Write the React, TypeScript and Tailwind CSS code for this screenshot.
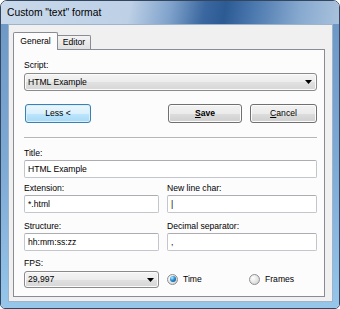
import clsx from "clsx";

function Label({ text, className }: { text: string; className?: string }) {
  return <div className={clsx("h-[12px] leading-[12px]", className)}>{text}</div>;
}

function Field({ value, className }: { value: string; className?: string }) {
  return (
    <div
      className={clsx(
        "flex h-[18px] items-center rounded-[2px] border border-[#c3c6cc] border-t-[#abadb3] bg-white pl-[3px]",
        className
      )}
    >
      {value}
    </div>
  );
}

function Combo({ value, className }: { value: string; className?: string }) {
  return (
    <div
      className={clsx(
        "flex items-center justify-between rounded-[3px] border border-[#8a8a8a] bg-[linear-gradient(#f4f4f4_0%,#ececec_50%,#e1e1e1_50%,#d6d6d6_100%)] pl-[3px] pr-[4px] shadow-[inset_0_0_0_1px_#fbfbfb]",
        className
      )}
    >
      <span>{value}</span>
      <svg width="7" height="4" viewBox="0 0 7 4">
        <path d="M0 0h7L3.5 4z" fill="#000" />
      </svg>
    </div>
  );
}

function Radio({ label, checked }: { label: string; checked?: boolean }) {
  return (
    <div className="flex items-center gap-[5px]">
      <span className="flex size-[11px] items-center justify-center rounded-full border border-[#8e8f8f] bg-[radial-gradient(circle_at_35%_35%,#ffffff_0%,#e6e6e6_50%,#c4c4c4_100%)]">
        {checked && (
          <span className="size-[6px] rounded-full bg-[radial-gradient(circle_at_35%_30%,#b8ecff_0%,#2a8fd6_45%,#0b3f78_100%)]" />
        )}
      </span>
      <span>{label}</span>
    </div>
  );
}

function Button({
  children,
  className,
  focused,
}: {
  children: React.ReactNode;
  className?: string;
  focused?: boolean;
}) {
  return (
    <div
      className={clsx(
        "flex h-[19px] items-center justify-center rounded-[3px] border",
        focused
          ? "border-[#3c7fb1] bg-[linear-gradient(#eaf6fd_0%,#d9f0fc_50%,#bee6fd_50%,#a7d9f5_100%)] shadow-[inset_0_0_0_1px_#d6effc]"
          : "border-[#707070] bg-[linear-gradient(#f2f2f2_0%,#ebebeb_50%,#dddddd_50%,#cfcfcf_100%)] shadow-[inset_0_0_0_1px_#fcfcfc]",
        className
      )}
    >
      {children}
    </div>
  );
}

export default function App() {
  return (
    <div className="flex h-[309px] w-[340px] flex-col overflow-hidden rounded-t-[7px] rounded-b-[5px] border border-[#34465e] font-['Liberation_Sans',Arial,sans-serif] text-[8.6px] text-black">
      {/* title bar */}
      <div className="flex h-[23px] shrink-0 items-center bg-[linear-gradient(100deg,#c9d9eb_0%,#bdd0e6_38%,#7fa2cb_50%,#3a679f_60%,#2c5a93_66%,#4a77ad_74%,#87a9cf_88%,#a9c2dd_100%)] pl-[6px] text-[10.3px]">
        Custom "text" format
      </div>

      {/* frame */}
      <div className="flex flex-1 flex-col bg-[linear-gradient(180deg,#6e98c6_0%,#7eaad6_50%,#96c6ea_100%)] pb-[6px] pl-[7px] pr-[6px]">
        <div className="flex flex-1 flex-col border border-[#9fb3cb] bg-[#f0f0f0] pt-[7px] pb-[4px] pl-[4px] pr-[7px]">
          {/* tabs */}
          <div className="flex h-[17px] items-end">
            <div className="relative z-10 -mb-px flex h-[18px] w-[45px] items-center justify-center rounded-t-[2px] border border-b-0 border-[#898c95] bg-[#fcfcfc] pb-[1px]">
              General
            </div>
            <div className="flex h-[14px] w-[33px] items-center justify-center rounded-tr-[2px] border border-b-0 border-l-0 border-[#898c95] bg-[linear-gradient(#f4f4f4,#e0e0e0)]">
              Editor
            </div>
          </div>

          {/* panel */}
          <div className="flex flex-1 flex-col border border-[#898c95] bg-[#fcfcfc] pt-[9px] pl-[10px] pr-[7px]">
            <Label text="Script:" className="mb-[2px]" />
            <Combo value="HTML Example" className="h-[18px]" />

            <div className="mt-[13px] flex">
              <Button focused className="ml-px w-[66px]">
                Less &lt;
              </Button>
              <Button className="ml-auto w-[74px] font-bold">
                <span className="underline underline-offset-1">S</span>ave
              </Button>
              <Button className="ml-[8px] w-[67px]">
                <span className="underline underline-offset-1">C</span>ancel
              </Button>
            </div>

            <div className="mt-[14px] border-t border-b border-t-[#b5b5b5] border-b-white" />

            <Label text="Title:" className="mt-[8px] mb-px" />
            <Field value="HTML Example" />

            <div className="mt-[4px] grid grid-cols-[135px_1fr] gap-x-[8px]">
              <div>
                <Label text="Extension:" className="mb-px" />
                <Field value="*.html" />
              </div>
              <div>
                <Label text="New line char:" className="mb-px" />
                <Field value="|" />
              </div>
            </div>

            <div className="mt-[7px] grid grid-cols-[135px_1fr] gap-x-[8px]">
              <div>
                <Label text="Structure:" className="mb-px" />
                <Field value="hh:mm:ss:zz" />
              </div>
              <div>
                <Label text="Decimal separator:" className="mb-px" />
                <Field value="," />
              </div>
            </div>

            <div className="mt-[6px] grid grid-cols-[135px_1fr] gap-x-[8px]">
              <div>
                <Label text="FPS:" className="mb-[2px]" />
                <Combo value="29,997" className="h-[17px]" />
              </div>
              <div className="flex items-end">
                <div className="flex h-[17px] items-center">
                  <div className="w-[82px]">
                    <Radio label="Time" checked />
                  </div>
                  <Radio label="Frames" />
                </div>
              </div>
            </div>
          </div>
        </div>
      </div>
    </div>
  );
}
